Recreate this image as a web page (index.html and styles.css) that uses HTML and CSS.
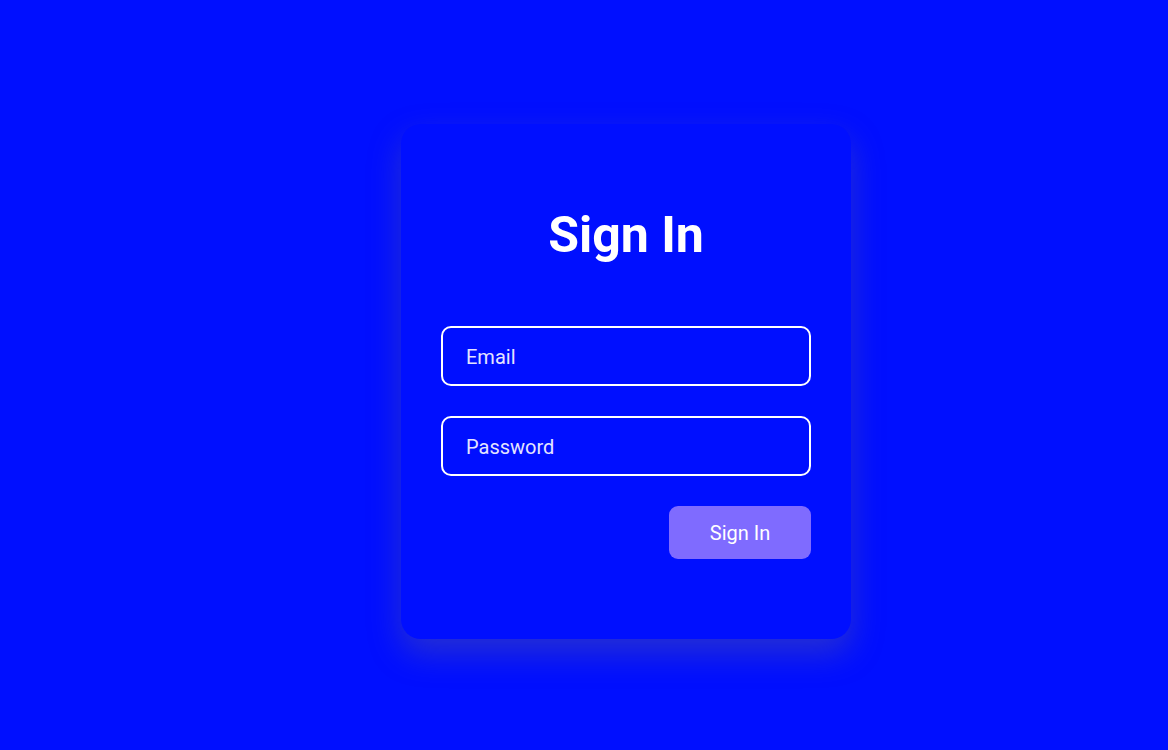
FILE: index.html
```html
<!DOCTYPE html>
<html lang="en">
<head>
    <meta charset="UTF-8">
    <meta name="viewport" content="width=device-width, initial-scale=1.0">
    <title>Sign In</title>
    <link rel="stylesheet" href="styles.css">
</head>
<body>
    <div class="page">
        <div class="card">
            <h1>Sign In</h1>
            <form class="login-form" id="loginForm">
                <input type="email" class="field" placeholder="Email">
                <input type="password" class="field" placeholder="Password">
                <div class="actions">
                    <button type="submit" class="submit-btn">Sign In</button>
                </div>
            </form>
        </div>
    </div>
</body>
</html>
```

FILE: styles.css
```css
:root {
    --bg-color: #000fff;
    --text-color: #ffffff;
    --placeholder-color: #e4e4ff;
    --button-color: #7f6bff;
    --card-shadow: 0 14px 32px rgba(110, 110, 130, 0.35);
}

* {
    margin: 0;
    padding: 0;
    box-sizing: border-box;
    font-family: Roboto, 'Liberation Sans', sans-serif;
}

body {
    background-color: var(--bg-color);
    color: var(--text-color);
    height: 750px;
    overflow: hidden;
}

.page {
    display: flex;
    justify-content: center;
    padding: 124px 0 0 84px;
}

.card {
    width: 450px;
    height: 515px;
    background: var(--bg-color);
    border-radius: 20px;
    padding: 83px 40px 80px;
    box-shadow: var(--card-shadow);
}

h1 {
    text-align: center;
    font-size: 50px;
    font-weight: 700;
    line-height: 56px;
    margin-bottom: 63px;
}

.login-form {
    display: flex;
    flex-direction: column;
    gap: 30px;
}

.field {
    width: 100%;
    height: 60px;
    padding: 2px 23px 0;
    background: transparent;
    border: 2px solid var(--text-color);
    border-radius: 10px;
    color: var(--text-color);
    font-size: 20px;
    outline: none;
}

.field::placeholder {
    color: var(--placeholder-color);
}

.actions {
    display: flex;
    justify-content: flex-end;
}

.submit-btn {
    width: 142px;
    height: 53px;
    background-color: var(--button-color);
    color: var(--text-color);
    border: none;
    border-radius: 9px;
    font-size: 20px;
    cursor: pointer;
}
```
